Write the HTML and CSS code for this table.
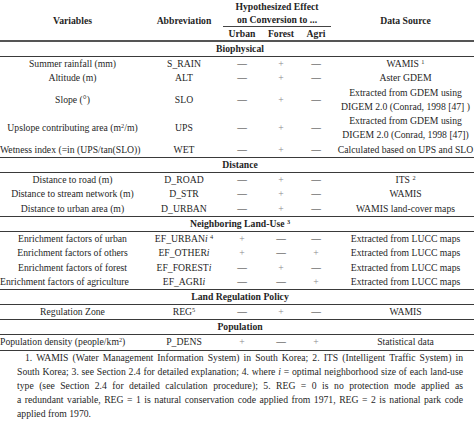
FILE: index.html
```html
<!DOCTYPE html>
<html>
<head>
<meta charset="utf-8">
<link rel="stylesheet" href="styles.css">
</head>
<body>
<div class="frame">
<table class="tbl">
<colgroup><col class="c-var"><col class="c-abbr"><col class="c-u"><col class="c-f"><col class="c-a"><col class="c-src"></colgroup>
<thead>
<tr class="h1"><th rowspan="2">Variables</th><th rowspan="2">Abbreviation</th><th colspan="3" class="grp">Hypothesized Effect<br>on Conversion to ...</th><th rowspan="2" class="src-h">Data Source</th></tr>
<tr class="h2"><th>Urban</th><th>Forest</th><th>Agri</th></tr>
</thead>
<tbody>
<tr class="sec"><td colspan="6">Biophysical</td></tr>
<tr><td>Summer rainfall (mm)</td><td>S_RAIN</td><td class="m">—</td><td class="p">+</td><td class="m">—</td><td>WAMIS <sup>1</sup></td></tr>
<tr><td>Altitude (m)</td><td>ALT</td><td class="m">—</td><td class="p">+</td><td class="m">—</td><td>Aster GDEM</td></tr>
<tr><td>Slope (°)</td><td>SLO</td><td class="m">—</td><td class="p">+</td><td class="m">—</td><td>Extracted from GDEM using<br>DIGEM 2.0 (Conrad, 1998 [47] )</td></tr>
<tr><td>Upslope contributing area (m<sup>2</sup>/m)</td><td>UPS</td><td class="m">—</td><td class="p">+</td><td class="m">—</td><td>Extracted from GDEM using<br>DIGEM 2.0 (Conrad, 1998 [47])</td></tr>
<tr><td class="wide">Wetness index (=in (UPS/tan(SLO))</td><td>WET</td><td class="m">—</td><td class="p">+</td><td class="m">—</td><td>Calculated based on UPS and SLO</td></tr>
<tr class="sec"><td colspan="6">Distance</td></tr>
<tr><td>Distance to road (m)</td><td>D_ROAD</td><td class="m">—</td><td class="p">+</td><td class="m">—</td><td>ITS <sup>2</sup></td></tr>
<tr><td>Distance to stream network (m)</td><td>D_STR</td><td class="m">—</td><td class="p">+</td><td class="m">—</td><td>WAMIS</td></tr>
<tr><td>Distance to urban area (m)</td><td>D_URBAN</td><td class="m">—</td><td class="p">+</td><td class="m">—</td><td>WAMIS land-cover maps</td></tr>
<tr class="sec"><td colspan="6">Neighboring Land-Use <sup>3</sup></td></tr>
<tr><td>Enrichment factors of urban</td><td>EF_URBAN<i>i</i> <sup>4</sup></td><td class="p">+</td><td class="m">—</td><td class="m">—</td><td>Extracted from LUCC maps</td></tr>
<tr><td>Enrichment factors of others</td><td>EF_OTHER<i>i</i></td><td class="p">+</td><td class="m">—</td><td class="p">+</td><td>Extracted from LUCC maps</td></tr>
<tr><td>Enrichment factors of forest</td><td>EF_FOREST<i>i</i></td><td class="m">—</td><td class="p">+</td><td class="m">—</td><td>Extracted from LUCC maps</td></tr>
<tr><td class="wide">Enrichment factors of agriculture</td><td>EF_AGRI<i>i</i></td><td class="m">—</td><td class="m">—</td><td class="p">+</td><td>Extracted from LUCC maps</td></tr>
<tr class="sec"><td colspan="6">Land Regulation Policy</td></tr>
<tr><td>Regulation Zone</td><td>REG<sup>5</sup></td><td class="m">—</td><td class="p">+</td><td class="m">—</td><td>WAMIS</td></tr>
<tr class="sec"><td colspan="6">Population</td></tr>
<tr class="last"><td class="wide">Population density (people/km<sup>2</sup>)</td><td>P_DENS</td><td class="p">+</td><td class="m">—</td><td class="p">+</td><td>Statistical data</td></tr>
</tbody>
</table>
<div class="note">
<div class="ln first">1. WAMIS (Water Management Information System) in South Korea; 2. ITS (Intelligent Traffic System) in</div>
<div class="ln">South Korea; 3. see Section 2.4 for detailed explanation; 4. where <i>i</i> = optimal neighborhood size of each land-use</div>
<div class="ln">type (see Section 2.4 for detailed calculation procedure); 5. REG = 0 is no protection mode applied as</div>
<div class="ln">a redundant variable, REG = 1 is natural conservation code applied from 1971, REG = 2 is national park code</div>
<div class="ln end">applied from 1970.</div>
</div>
</div>
</body>
</html>
```
FILE: styles.css
```css
html, body {
  margin: 0;
  padding: 0;
  background: #ffffff;
}
.frame {
  width: 474px;
  height: 422px;
  overflow: hidden;
  font-family: "Liberation Serif", "Times New Roman", serif;
  font-size: 9.7px;
  color: #1f1f1f;
}
.tbl {
  width: 480px;
  border-collapse: collapse;
  table-layout: fixed;
  font-family: "Liberation Serif", "Times New Roman", serif;
}
.c-var { width: 145px; }
.c-abbr { width: 78px; }
.c-u { width: 38px; }
.c-f { width: 40px; }
.c-a { width: 30px; }
.c-src { width: 149px; }
.tbl th, .tbl td {
  padding: 0;
  text-align: center;
  white-space: nowrap;
  vertical-align: middle;
}
.tbl th {
  font-weight: bold;
  line-height: 13px;
}
.tbl td {
  line-height: 14.3px;
}
.tbl thead tr.h2 th {
  border-bottom: 2px solid #555555;
}
.tbl thead tr.h1 th[rowspan] {
  border-bottom: 2px solid #555555;
}
.tbl th.grp {
  border-bottom: 1px solid #444444;
}
.tbl tr.sec td {
  font-weight: bold;
  line-height: 14px;
  border-top: 1px solid #3a3a3a;
  border-bottom: 1px solid #3a3a3a;
}
.tbl tr.last td {
  border-bottom: 1px solid #3a3a3a;
}
.tbl td.wide {
  text-align: left;
}
.tbl td.m {
  color: #333333;
}
.tbl td.p {
  color: #8a8a8a;
}
sup {
  font-size: 0.65em;
  line-height: 0;
  vertical-align: 0.45em;
}
.note {
  padding: 0 11px 0 17px;
  line-height: 14px;
}
.note .ln {
  text-align: justify;
  text-align-last: justify;
  white-space: nowrap;
}
.note .ln.first {
  text-indent: 8px;
}
.note .ln.end {
  text-align-last: left;
}
```
